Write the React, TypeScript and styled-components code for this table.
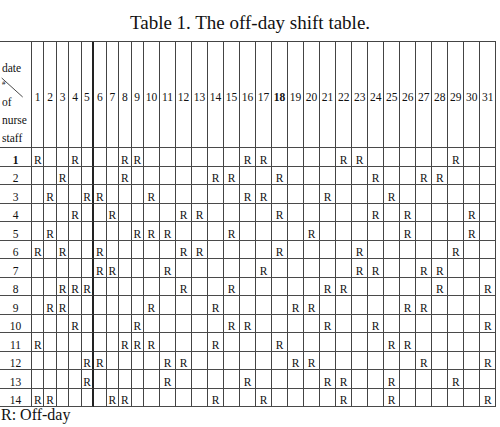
import React from "react";
import styled, { createGlobalStyle } from "styled-components";

const offDays: Record<number, number[]> = {
    1: [1, 4, 8, 9, 16, 17, 22, 23, 29],
    2: [3, 8, 14, 15, 18, 24, 27, 28],
    3: [2, 5, 6, 10, 16, 17, 21, 25],
    4: [4, 7, 12, 13, 18, 24, 26, 30],
    5: [2, 9, 10, 11, 15, 20, 26, 30],
    6: [1, 3, 6, 12, 13, 18, 23, 29],
    7: [6, 7, 11, 17, 23, 24, 27, 28],
    8: [3, 4, 5, 12, 15, 21, 22, 28, 31],
    9: [2, 3, 10, 14, 19, 20, 26, 27],
    10: [4, 9, 15, 16, 21, 24, 31],
    11: [1, 8, 9, 10, 14, 18, 25, 26],
    12: [5, 6, 11, 12, 19, 20, 27, 31],
    13: [5, 11, 16, 21, 22, 25, 29],
    14: [1, 2, 7, 8, 14, 17, 22, 25, 31],
};

const days = Array.from({ length: 31 }, (_, i) => i + 1);
const staff = Array.from({ length: 14 }, (_, i) => i + 1);

const App = () => {
    return (
        <Page>
            <GlobalStyle />
            <Title>Table 1. The off-day shift table.</Title>
            <Grid>
                <Corner>
                    <span>date</span>
                    <SlashLine>
                        <Hash>#</Hash>
                        <Slash width="23" height="21" viewBox="0 0 23 21">
                            <line x1="0.7" y1="1" x2="21.7" y2="20" stroke="#333" strokeWidth="0.9" />
                        </Slash>
                    </SlashLine>
                    <span>of</span>
                    <span>nurse</span>
                    <span>staff</span>
                </Corner>
                {days.map((d) => (
                    <DayHead key={d} $thick={d === 5} $bold={d === 18}>
                        {d}
                    </DayHead>
                ))}
                {staff.map((s) => (
                    <React.Fragment key={s}>
                        <Cell $bold={s === 1}>{s}</Cell>
                        {days.map((d) => (
                            <Cell key={d} $thick={d === 5}>
                                {offDays[s].includes(d) ? "R" : ""}
                            </Cell>
                        ))}
                    </React.Fragment>
                ))}
            </Grid>
            <Legend>R: Off-day</Legend>
        </Page>
    );
};

export default App;

const GlobalStyle = createGlobalStyle`
body {
    margin: 0;
    background: #ffffff;
    color: #111111;
    font-family: "Liberation Serif", "Times New Roman", serif;
}
`;

const Page = styled.div`
width: 500px;
height: 427px;
overflow: hidden;
background: #ffffff;
`;

const Title = styled.div`
height: 41px;
box-sizing: border-box;
padding: 13px 0 9px 0;
font-size: 19px;
line-height: 19px;
text-align: center;
color: #111111;
`;

const Grid = styled.div`
display: grid;
grid-template-columns: 32px repeat(9, 12.44px) repeat(22, 16.03px);
grid-template-rows: 106.3px repeat(14, 18.5px);
width: max-content;
border-top: 1px solid #444444;
`;

const Cell = styled.div<{ $thick?: boolean; $bold?: boolean }>`
box-sizing: border-box;
display: flex;
align-items: center;
justify-content: center;
padding-top: 5px;
border-right: ${(p) => (p.$thick ? "2px solid #222222" : "1px solid #444444")};
border-bottom: 1px solid #4a4a4a;
font-size: 11.5px;
line-height: 12px;
font-weight: ${(p) => (p.$bold ? "bold" : "normal")};
overflow: hidden;
`;

const DayHead = styled(Cell)`
padding-top: 4px;
`;

const Corner = styled.div`
box-sizing: border-box;
display: flex;
flex-direction: column;
padding: 17px 0 0 2px;
border-right: 1px solid #444444;
border-bottom: 1px solid #444444;
font-size: 11.5px;
line-height: 18px;
overflow: visible;
`;

const SlashLine = styled.div`
position: relative;
height: 18px;
`;

const Hash = styled.span`
display: block;
padding-top: 3px;
font-size: 7px;
line-height: 7px;
`;

const Slash = styled.svg`
position: absolute;
left: -1px;
top: 0;
overflow: visible;
`;

const Legend = styled.div`
font-size: 16px;
line-height: 16px;
padding-left: 1px;
color: #111111;
`;
